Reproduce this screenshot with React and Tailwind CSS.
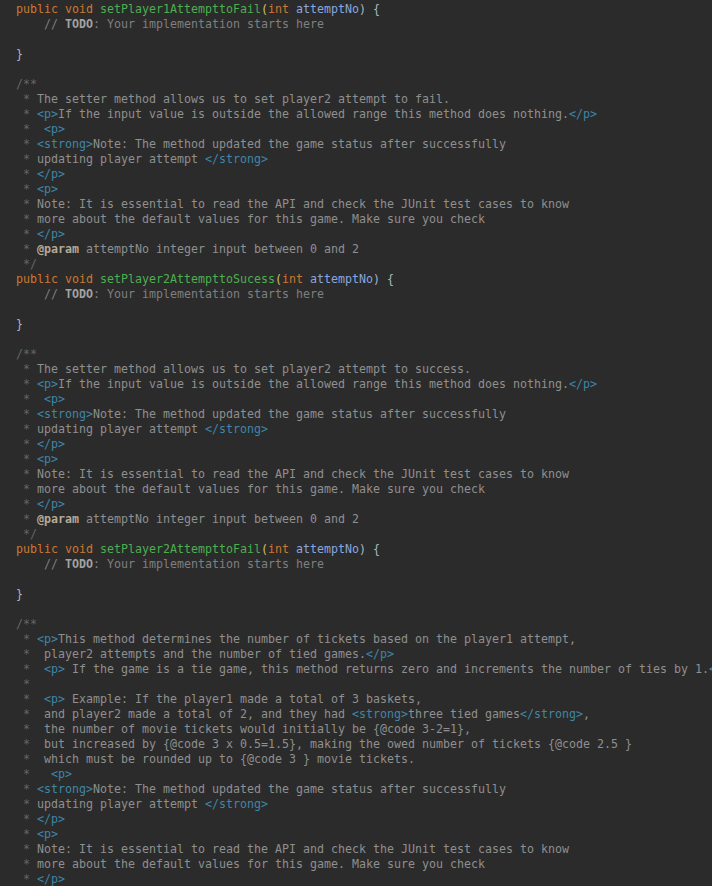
const KW = "text-[#cc7832]";
const FN = "text-[#4caf50]";
const PARAM = "text-[#8aa6df]";
const PLAIN = "text-[#a9b7c6]";
const PAREN = "text-[#cfc162]";
const DOC = "text-[#8f8f8f]";
const STAR = "text-[#656565]";
const TAG = "text-[#3f86a8]";
const AT = "text-[#b3aa98] font-bold";
const CMT = "text-[#7f7f7f]";
const TODO = "text-[#a3a3a3] font-bold";

const method = (name) => [
  [KW, "public void "],
  [FN, name],
  [PAREN, "("],
  [KW, "int "],
  [PARAM, "attemptNo"],
  [PLAIN, ") {"],
];

const todo = [
  [CMT, "    // "],
  [TODO, "TODO"],
  [CMT, ": Your implementation starts here"],
];

// split a javadoc line into star prefix, html tags, @param and plain text
const doc = (raw) => {
  const m = raw.match(/^(\s*\*\/?|\/\*\*)(.*)$/);
  const segs = [[STAR, m[1]]];
  m[2]
    .split(/(<\/?[a-z]+>|@param)/)
    .filter(Boolean)
    .forEach((p) => {
      if (p === "@param") segs.push([AT, p]);
      else if (p.startsWith("<")) segs.push([TAG, p]);
      else segs.push([DOC, p]);
    });
  return segs;
};

const noteBlock = (lead) => [
  doc(lead),
  doc(" * <strong>Note: The method updated the game status after successfully"),
  doc(" * updating player attempt </strong>"),
  doc(" * </p>"),
  doc(" * <p>"),
  doc(" * Note: It is essential to read the API and check the JUnit test cases to know"),
  doc(" * more about the default values for this game. Make sure you check"),
  doc(" * </p>"),
];

const setterDoc = (what) => [
  doc("/**"),
  doc(` * The setter method allows us to set player2 attempt to ${what}.`),
  doc(" * <p>If the input value is outside the allowed range this method does nothing.</p>"),
  ...noteBlock(" *  <p>"),
  doc(" * @param attemptNo integer input between 0 and 2"),
  doc(" */"),
];

const body = [todo, [], [[PLAIN, "}"]], []];

const lines = [
  method("setPlayer1AttempttoFail"),
  ...body,
  ...setterDoc("fail"),
  method("setPlayer2AttempttoSucess"),
  ...body,
  ...setterDoc("success"),
  method("setPlayer2AttempttoFail"),
  ...body,
  doc("/**"),
  doc(" * <p>This method determines the number of tickets based on the player1 attempt,"),
  doc(" *  player2 attempts and the number of tied games.</p>"),
  doc(" *  <p> If the game is a tie game, this method returns zero and increments the number of ties by 1.</p>"),
  doc(" *"),
  doc(" *  <p> Example: If the player1 made a total of 3 baskets,"),
  doc(" *  and player2 made a total of 2, and they had <strong>three tied games</strong>,"),
  doc(" *  the number of movie tickets would initially be {@code 3-2=1},"),
  doc(" *  but increased by {@code 3 x 0.5=1.5}, making the owed number of tickets {@code 2.5 }"),
  doc(" *  which must be rounded up to {@code 3 } movie tickets."),
  ...noteBlock(" *   <p>"),
];

export default function App() {
  return (
    <div className="w-[712px] h-[886px] overflow-hidden bg-[#2b2b2b] pl-4 pt-[2px] font-['DejaVu_Sans_Mono',monospace] text-[11.63px] leading-[15px]">
      {lines.map((segs, i) => (
        <div key={i} className="h-[15px] whitespace-pre">
          {segs.map(([cls, text], j) => (
            <span key={j} className={cls}>
              {text}
            </span>
          ))}
        </div>
      ))}
    </div>
  );
}
